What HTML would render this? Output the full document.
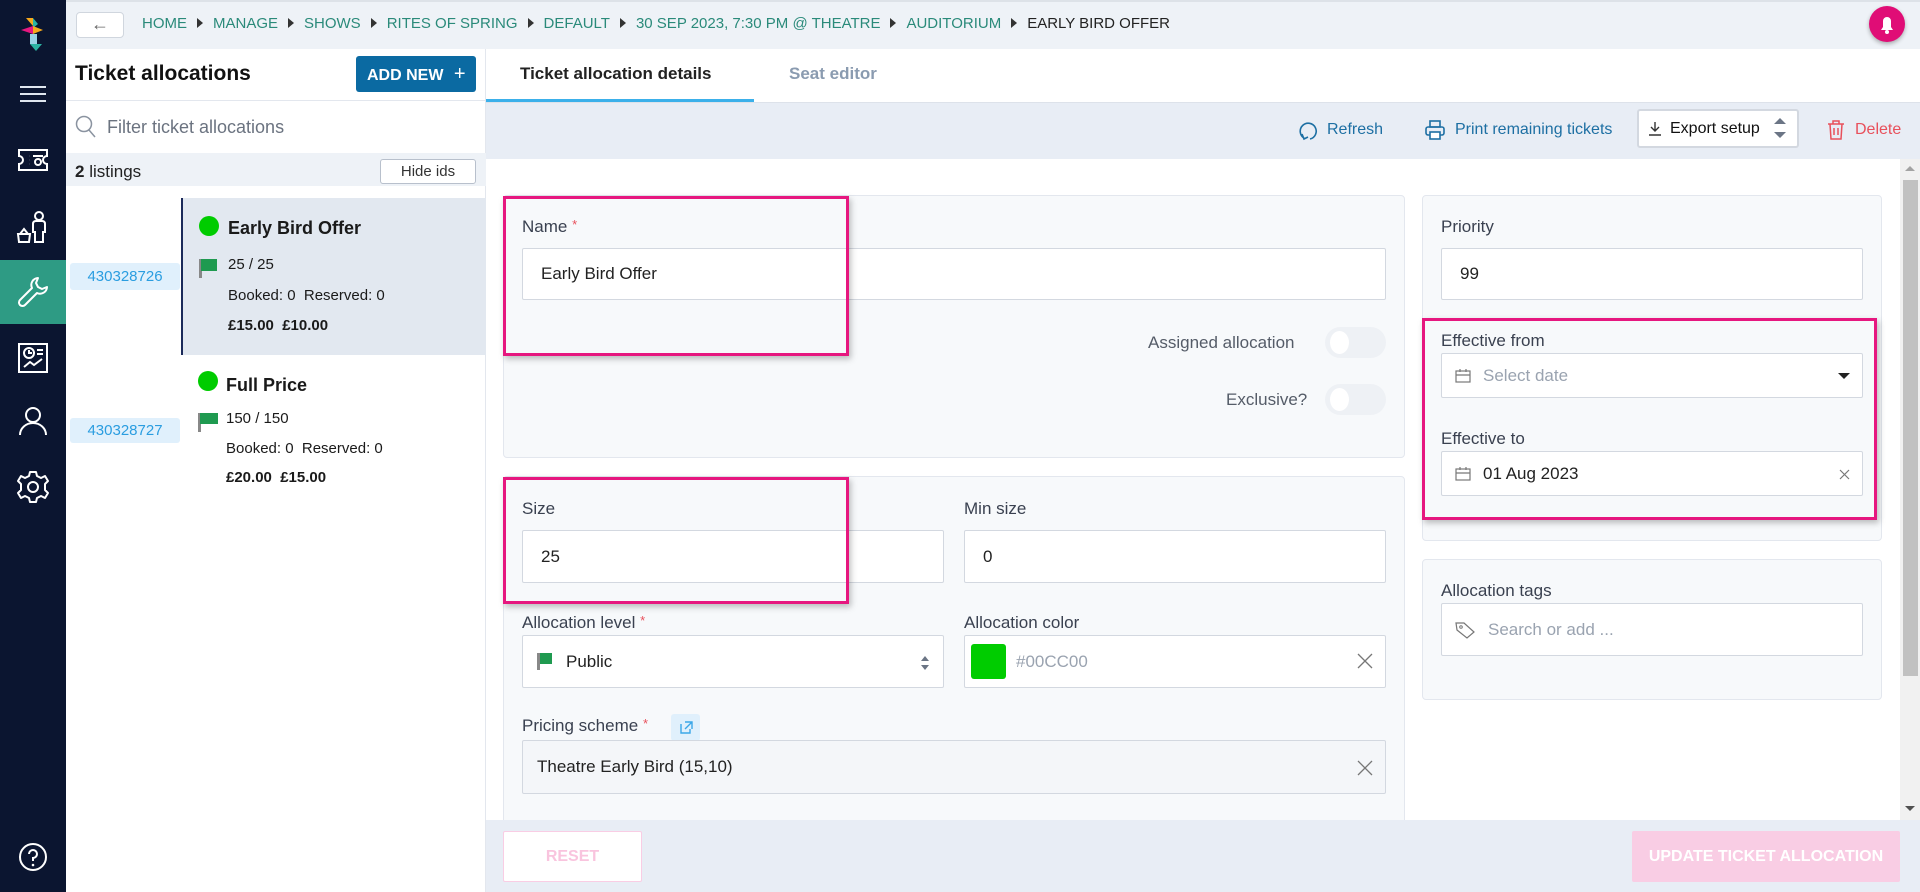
<!DOCTYPE html>
<html><head><meta charset="utf-8"><style>
*{box-sizing:border-box;margin:0;padding:0}
body{width:1920px;height:892px;overflow:hidden;font-family:"Liberation Sans",sans-serif;background:#fff;position:relative;color:#1a1a1a}
.a{position:absolute}
.sb{left:0;top:0;width:66px;height:892px;background:#0b1530}
.ic{position:absolute;left:0;width:66px;display:flex;justify-content:center}
.lbl{position:absolute;font-size:17px;color:#3a4150}
.inp{position:absolute;background:#fff;border:1px solid #d3d8e0;border-radius:2px;font-size:17px;display:flex;align-items:center;padding-left:18px;color:#222}
.card{position:absolute;background:#f7f9fb;border:1px solid #e3e7ee;border-radius:4px}
.pink{position:absolute;border:3px solid #e6177f;box-shadow:2px 3px 6px rgba(0,0,0,.25)}
.tog{position:absolute;width:61px;height:31px;border-radius:16px;background:#eef1f5}
.tog:after{content:"";position:absolute;left:5px;top:4px;width:19px;height:23px;border-radius:50%;background:#fff}
.bc{color:#2a8a7a}
.arr{display:inline-block;width:0;height:0;border-left:6px solid #333;border-top:5px solid transparent;border-bottom:5px solid transparent;margin:0 10px}
</style></head><body>
<!-- sidebar -->
<div class="a sb"></div>
<div class="ic" style="top:16px"><svg width="30" height="36" viewBox="0 0 30 36"><polygon points="8,2 15,2 15,10" fill="#f7a81b"/><polygon points="15,2 20,8 15,12" fill="#2bb3a3"/><polygon points="3,14 15,10 15,18" fill="#e6177f"/><polygon points="15,10 25,14 15,18" fill="#f7a81b"/><rect x="12" y="18" width="7" height="10" fill="#9ad3e6"/><polygon points="12,28 24,28 18,35" fill="#2bb3a3"/></svg></div>
<div class="ic" style="top:84px"><svg width="30" height="20"><path d="M2 3H28M2 10H28M2 17H28" stroke="#dfe6ee" stroke-width="2"/></svg></div>
<div class="ic" style="top:148px"><svg width="32" height="24" viewBox="0 0 32 24"><path d="M2 2H30V8A4 4 0 0 0 30 16V22H2V16A4 4 0 0 0 2 8Z" fill="none" stroke="#fff" stroke-width="2"/><path d="M12 8H12.1M12 12H12.1M12 16H12.1M16 8H26" stroke="#fff" stroke-width="2"/><circle cx="21" cy="14" r="3" fill="none" stroke="#fff" stroke-width="2"/></svg></div>
<div class="ic" style="top:210px"><svg width="34" height="34" viewBox="0 0 34 34"><circle cx="23" cy="6" r="4" fill="none" stroke="#fff" stroke-width="2"/><path d="M17 22V14Q17 11 20 11H26Q29 11 29 14V22H27V32H19V22Z" fill="none" stroke="#fff" stroke-width="2"/><path d="M2 24H14L13 32H3Z M4 24L8 19L12 24" fill="none" stroke="#fff" stroke-width="2"/></svg></div>
<div class="a" style="left:0;top:260px;width:66px;height:64px;background:#2e9b84"></div>
<div class="ic" style="top:275px"><svg width="34" height="34" viewBox="0 0 34 34"><path d="M22 3A7 7 0 0 0 16 13L4 25A3 3 0 0 0 9 30L21 18A7 7 0 0 0 31 12L26 14L22 12L20 8Z" fill="none" stroke="#fff" stroke-width="2" stroke-linejoin="round"/></svg></div>
<div class="ic" style="top:342px"><svg width="32" height="32" viewBox="0 0 32 32"><rect x="2" y="2" width="28" height="28" fill="none" stroke="#fff" stroke-width="2"/><circle cx="12" cy="11" r="5" fill="none" stroke="#fff" stroke-width="2"/><path d="M12 8V11H15M20 8H26M20 12H26M7 25L13 20L17 23L25 17" fill="none" stroke="#fff" stroke-width="2"/></svg></div>
<div class="ic" style="top:405px"><svg width="30" height="32" viewBox="0 0 30 32"><circle cx="15" cy="10" r="7" fill="none" stroke="#fff" stroke-width="2"/><path d="M2 30A13 12 0 0 1 28 30" fill="none" stroke="#fff" stroke-width="2"/></svg></div>
<div class="ic" style="top:470px"><svg width="34" height="34" viewBox="0 0 34 34"><circle cx="17" cy="17" r="5" fill="none" stroke="#fff" stroke-width="2"/><path d="M14 2H20L21 6L25 8L29 6L32 11L29 14V20L32 23L29 28L25 26L21 28L20 32H14L13 28L9 26L5 28L2 23L5 20V14L2 11L5 6L9 8L13 6Z" fill="none" stroke="#fff" stroke-width="2" stroke-linejoin="round"/></svg></div>
<div class="ic" style="top:842px"><svg width="30" height="30" viewBox="0 0 30 30"><circle cx="15" cy="15" r="13" fill="none" stroke="#fff" stroke-width="2"/><path d="M11 12A4 4 0 1 1 15 16V19" fill="none" stroke="#fff" stroke-width="2"/><circle cx="15" cy="23" r="1.3" fill="#fff"/></svg></div>

<!-- top bar -->
<div class="a" style="left:66px;top:0;width:1854px;height:49px;background:#eef2f7;border-top:2px solid #dde2e8"></div>
<div class="a" style="left:76px;top:12px;width:48px;height:26px;background:#fff;border:1px solid #d0d6de;border-radius:4px;color:#666;font-size:18px;text-align:center;line-height:22px">&larr;</div>
<div class="a" style="left:142px;top:15px;font-size:15px;white-space:nowrap"><span class="bc">HOME</span><span class="arr"></span><span class="bc">MANAGE</span><span class="arr"></span><span class="bc">SHOWS</span><span class="arr"></span><span class="bc">RITES OF SPRING</span><span class="arr"></span><span class="bc">DEFAULT</span><span class="arr"></span><span class="bc">30 SEP 2023, 7:30 PM @ THEATRE</span><span class="arr"></span><span class="bc">AUDITORIUM</span><span class="arr"></span><span style="color:#222">EARLY BIRD OFFER</span></div>
<div class="a" style="left:1869px;top:6px;width:36px;height:36px;border-radius:50%;background:#e00d76;box-shadow:0 2px 4px rgba(0,0,0,.3)"><svg width="36" height="36"><path d="M12 24H24L22 21V15A4 4 0 0 0 14 15V21Z" fill="#fff"/><circle cx="18" cy="26" r="2" fill="#fff"/></svg></div>

<!-- left panel -->
<div class="a" style="left:66px;top:49px;width:420px;height:843px;background:#fff;border-right:1px solid #e3e7ee"></div>
<div class="a" style="left:75px;top:62px;font-size:21px;font-weight:bold;color:#111">Ticket allocations</div>
<div class="a" style="left:356px;top:56px;width:120px;height:36px;background:#0b6aa2;border-radius:3px;color:#fff;font-weight:bold;font-size:16px;line-height:36px;padding-left:11px">ADD NEW <span style="font-weight:normal;font-size:20px;margin-left:6px">+</span></div>
<div class="a" style="left:66px;top:100px;width:420px;height:1px;background:#e3e7ee"></div>
<div class="a" style="left:75px;top:115px"><svg width="22" height="24"><circle cx="9" cy="9" r="7.5" fill="none" stroke="#8a93a0" stroke-width="1.5"/><path d="M14 15L20 22" stroke="#8a93a0" stroke-width="1.5"/></svg></div>
<div class="a" style="left:107px;top:117px;font-size:18px;color:#6b7380">Filter ticket allocations</div>
<div class="a" style="left:66px;top:153px;width:420px;height:33px;background:#eef2f7"></div>
<div class="a" style="left:75px;top:162px;font-size:17px;color:#222"><b>2</b> listings</div>
<div class="a" style="left:380px;top:159px;width:96px;height:25px;background:#fff;border:1px solid #b8c0cc;border-radius:3px;font-size:15px;text-align:center;line-height:23px;color:#333">Hide ids</div>

<div class="a" style="left:181px;top:198px;width:305px;height:157px;background:#e2e8f0;border-left:2px solid #1b2a5a"></div>
<div class="a" style="left:70px;top:263px;width:110px;height:27px;background:#e0f0fc;border-radius:3px;color:#2a9de0;font-size:15px;text-align:center;line-height:27px">430328726</div>
<div class="a" style="left:199px;top:216px;width:20px;height:20px;border-radius:50%;background:#00cc00"></div>
<div class="a" style="left:228px;top:218px;font-size:18px;font-weight:bold">Early Bird Offer</div>
<div class="a" style="left:199px;top:259px;width:3px;height:19px;background:#888"></div><div class="a" style="left:201px;top:259px;width:16px;height:12px;background:#1f9a50"></div>
<div class="a" style="left:228px;top:256px;font-size:15px">25 / 25</div>
<div class="a" style="left:228px;top:287px;font-size:15px">Booked: 0&nbsp;&nbsp;Reserved: 0</div>
<div class="a" style="left:228px;top:317px;font-size:15px;font-weight:bold">£15.00&nbsp;&nbsp;£10.00</div>

<div class="a" style="left:70px;top:418px;width:110px;height:25px;background:#e0f0fc;border-radius:3px;color:#2a9de0;font-size:15px;text-align:center;line-height:25px">430328727</div>
<div class="a" style="left:198px;top:371px;width:20px;height:20px;border-radius:50%;background:#00cc00"></div>
<div class="a" style="left:226px;top:375px;font-size:18px;font-weight:bold">Full Price</div>
<div class="a" style="left:198px;top:413px;width:3px;height:19px;background:#888"></div><div class="a" style="left:200px;top:413px;width:18px;height:11px;background:#1f9a50"></div>
<div class="a" style="left:226px;top:410px;font-size:15px">150 / 150</div>
<div class="a" style="left:226px;top:440px;font-size:15px">Booked: 0&nbsp;&nbsp;Reserved: 0</div>
<div class="a" style="left:226px;top:469px;font-size:15px;font-weight:bold">£20.00&nbsp;&nbsp;£15.00</div>

<!-- tabs -->
<div class="a" style="left:520px;top:64px;font-size:17px;font-weight:bold;color:#222">Ticket allocation details</div>
<div class="a" style="left:789px;top:64px;font-size:17px;font-weight:bold;color:#8a9bb0">Seat editor</div>
<div class="a" style="left:486px;top:99px;width:268px;height:3px;background:#3bb0ea"></div>
<div class="a" style="left:486px;top:102px;width:1434px;height:57px;background:#e8edf5;border-top:1px solid #dde2ea"></div>
<div class="a" style="left:1298px;top:120px"><svg width="20" height="22"><path d="M6 18A8 8 0 1 1 12 19" fill="none" stroke="#1d6fa3" stroke-width="1.6"/><path d="M4 14L6 19L10 17" fill="none" stroke="#1d6fa3" stroke-width="1.6"/></svg></div>
<div class="a" style="left:1327px;top:121px;font-size:16px;color:#1d6fa3">Refresh</div>
<div class="a" style="left:1424px;top:119px"><svg width="22" height="22"><rect x="6" y="2" width="10" height="6" fill="none" stroke="#1d6fa3" stroke-width="1.6"/><rect x="2" y="8" width="18" height="8" rx="2" fill="none" stroke="#1d6fa3" stroke-width="1.6"/><rect x="6" y="13" width="10" height="7" fill="#fff" stroke="#1d6fa3" stroke-width="1.6"/></svg></div>
<div class="a" style="left:1455px;top:121px;font-size:16px;color:#1d6fa3">Print remaining tickets</div>
<div class="a" style="left:1637px;top:109px;width:162px;height:39px;background:#fff;border:2px solid #d3d8e0;border-radius:3px"></div>
<div class="a" style="left:1648px;top:121px"><svg width="14" height="16"><path d="M7 1V10M3 6L7 10L11 6M1 14H13" fill="none" stroke="#333" stroke-width="1.4"/></svg></div>
<div class="a" style="left:1670px;top:120px;font-size:16px;color:#111">Export setup</div>
<div class="a" style="left:1772px;top:116px"><svg width="16" height="26"><path d="M2 8L8 2L14 8Z M2 16L8 22L14 16Z" fill="#6b7585"/></svg></div>
<div class="a" style="left:1827px;top:120px"><svg width="18" height="20"><path d="M1 4H17M6 4V1H12V4M3 4L4 19H14L15 4M7 8V15M11 8V15" fill="none" stroke="#e8505b" stroke-width="1.5"/></svg></div>
<div class="a" style="left:1855px;top:121px;font-size:16px;color:#e8505b">Delete</div>

<!-- cards -->
<div class="card" style="left:503px;top:195px;width:902px;height:263px"></div>
<div class="lbl" style="left:522px;top:217px">Name <span style="color:#e8505b;font-size:13px;vertical-align:top">*</span></div>
<div class="inp" style="left:522px;top:248px;width:864px;height:52px">Early Bird Offer</div>
<div class="lbl" style="left:1148px;top:333px;color:#555c68">Assigned allocation</div>
<div class="tog" style="left:1325px;top:327px"></div>
<div class="lbl" style="left:1226px;top:390px;color:#555c68">Exclusive?</div>
<div class="tog" style="left:1325px;top:384px"></div>
<div class="pink" style="left:503px;top:196px;width:346px;height:160px"></div>

<div class="card" style="left:503px;top:476px;width:902px;height:380px"></div>
<div class="lbl" style="left:522px;top:499px">Size</div>
<div class="inp" style="left:522px;top:530px;width:422px;height:53px">25</div>
<div class="lbl" style="left:964px;top:499px">Min size</div>
<div class="inp" style="left:964px;top:530px;width:422px;height:53px">0</div>
<div class="pink" style="left:503px;top:477px;width:346px;height:127px"></div>
<div class="lbl" style="left:522px;top:613px">Allocation level <span style="color:#e8505b;font-size:13px;vertical-align:top">*</span></div>
<div class="inp" style="left:522px;top:635px;width:422px;height:53px;padding-left:14px"><span style="display:inline-block;width:3px;height:17px;background:#888;margin-right:0"></span><span style="display:inline-block;width:12px;height:11px;background:#1f9a50;margin-top:-6px;margin-right:14px"></span>Public<svg style="position:absolute;right:12px;top:18px" width="12" height="18"><path d="M2 7L6 2L10 7Z M2 11L6 16L10 11Z" fill="#6b7585"/></svg></div>
<div class="lbl" style="left:964px;top:613px">Allocation color</div>
<div class="inp" style="left:964px;top:635px;width:422px;height:53px;padding-left:0"><div style="width:35px;height:35px;margin:0 10px 0 6px;background:#00cc00;border-radius:3px"></div><span style="color:#9aa3b0">#00CC00</span><svg style="position:absolute;right:12px;top:17px" width="16" height="16"><path d="M1 1L15 15M15 1L1 15" stroke="#777" stroke-width="1.3"/></svg></div>
<div class="lbl" style="left:522px;top:716px">Pricing scheme <span style="color:#e8505b;font-size:13px;vertical-align:top">*</span></div>
<div class="a" style="left:671px;top:714px;width:29px;height:27px;background:#e0f0fc;border-radius:3px"><svg width="29" height="27"><path d="M10 10V19H19V15M14 8H21V15M21 8L14 15" fill="none" stroke="#3ba7e8" stroke-width="1.4"/></svg></div>
<div class="inp" style="left:522px;top:740px;width:864px;height:54px;background:#f4f6f9;padding-left:14px">Theatre Early Bird (15,10)<svg style="position:absolute;right:12px;top:19px" width="16" height="16"><path d="M1 1L15 15M15 1L1 15" stroke="#777" stroke-width="1.3"/></svg></div>

<div class="card" style="left:1422px;top:195px;width:460px;height:346px"></div>
<div class="lbl" style="left:1441px;top:217px">Priority</div>
<div class="inp" style="left:1441px;top:248px;width:422px;height:52px">99</div>
<div class="lbl" style="left:1441px;top:331px">Effective from</div>
<div class="inp" style="left:1441px;top:353px;width:422px;height:45px;color:#9aa3b0;padding-left:13px"><svg width="16" height="14" style="margin-right:12px"><rect x="1" y="2" width="14" height="11" fill="none" stroke="#777" stroke-width="1.2"/><path d="M1 6H15M5 0V3M11 0V3" stroke="#777" stroke-width="1.2"/></svg>Select date<svg style="position:absolute;right:12px;top:19px" width="12" height="7"><path d="M0 0H12L6 6Z" fill="#222"/></svg></div>
<div class="lbl" style="left:1441px;top:429px">Effective to</div>
<div class="inp" style="left:1441px;top:451px;width:422px;height:45px;padding-left:13px"><svg width="16" height="14" style="margin-right:12px"><rect x="1" y="2" width="14" height="11" fill="none" stroke="#777" stroke-width="1.2"/><path d="M1 6H15M5 0V3M11 0V3" stroke="#777" stroke-width="1.2"/></svg>01 Aug 2023<svg style="position:absolute;right:12px;top:17px" width="11" height="11"><path d="M1 1L10 10M10 1L1 10" stroke="#777" stroke-width="1.2"/></svg></div>
<div class="pink" style="left:1422px;top:318px;width:455px;height:202px"></div>

<div class="card" style="left:1422px;top:559px;width:460px;height:141px"></div>
<div class="lbl" style="left:1441px;top:581px">Allocation tags</div>
<div class="inp" style="left:1441px;top:603px;width:422px;height:53px;color:#9aa3b0;padding-left:12px"><svg width="22" height="18" style="margin-right:12px"><path d="M2 2H10L20 11L13 17L3 9Z" fill="none" stroke="#777" stroke-width="1.2"/><circle cx="7" cy="6" r="1.3" fill="none" stroke="#777"/></svg>Search or add ...</div>

<!-- scrollbar -->
<div class="a" style="left:1900px;top:159px;width:20px;height:661px;background:#f1f1f1"></div>
<div class="a" style="left:1903px;top:180px;width:15px;height:496px;background:#c1c1c1"></div>
<div class="a" style="left:1905px;top:166px;width:0;height:0;border-left:5px solid transparent;border-right:5px solid transparent;border-bottom:5px solid #a3a3a3"></div>
<div class="a" style="left:1905px;top:806px;width:0;height:0;border-left:5px solid transparent;border-right:5px solid transparent;border-top:5px solid #505050"></div>

<!-- bottom bar -->
<div class="a" style="left:486px;top:820px;width:1434px;height:72px;background:#e8edf5"></div>
<div class="a" style="left:503px;top:831px;width:139px;height:51px;background:#fff;border:1px solid #f9cde4;border-radius:2px;color:#f9c4de;font-weight:bold;font-size:16px;text-align:center;line-height:49px">RESET</div>
<div class="a" style="left:1632px;top:831px;width:268px;height:51px;background:#f9cde4;border-radius:2px;color:#fff;font-weight:bold;font-size:16px;text-align:center;line-height:51px">UPDATE TICKET ALLOCATION</div>
</body></html>
